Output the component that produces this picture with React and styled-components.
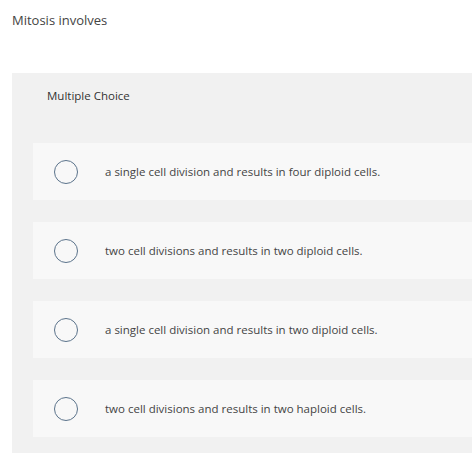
import React from "react";
import styled, { createGlobalStyle } from "styled-components";

const Global = createGlobalStyle`
  html, body { margin: 0; padding: 0; background: #ffffff; }
  body { font-family: "Open Sans", "Lato", sans-serif; }
`;

const Page = styled.div`
  width: 474px;
  height: 455px;
  overflow: hidden;
  padding: 11px 2px 0 12px;
  box-sizing: border-box;
`;

const Question = styled.div`
  font-size: 13px;
  color: #444;
  line-height: 18px;
  height: 62px;
`;

const Panel = styled.div`
  background: #f1f1f1;
  padding-left: 21px;
  padding-bottom: 16px;
`;

const Header = styled.div`
  font-size: 11.5px;
  color: #333;
  height: 46px;
  display: flex;
  align-items: center;
  padding-left: 14px;
  box-sizing: border-box;
  padding-bottom: 1px;
`;

const List = styled.div`
  display: flex;
  flex-direction: column;
  gap: 22px;
  padding-top: 24px;
`;

const Card = styled.label`
  background: #f8f8f8;
  height: 57px;
  display: flex;
  align-items: center;
  padding-left: 21px;
  gap: 27px;
`;

const Radio = styled.span`
  width: 22px;
  height: 22px;
  border-radius: 50%;
  border: 1.6px solid #5b738b;
  box-sizing: content-box;
  flex: none;
`;

const Text = styled.span`
  font-size: 11.5px;
  color: #444;
`;

const options = [
  "a single cell division and results in four diploid cells.",
  "two cell divisions and results in two diploid cells.",
  "a single cell division and results in two diploid cells.",
  "two cell divisions and results in two haploid cells.",
];

export default function App() {
  return (
    <>
      <Global />
      <Page>
        <Question>Mitosis involves</Question>
        <Panel>
          <Header>Multiple Choice</Header>
          <List>
            {options.map((o) => (
              <Card key={o}>
                <Radio />
                <Text>{o}</Text>
              </Card>
            ))}
          </List>
        </Panel>
      </Page>
    </>
  );
}
